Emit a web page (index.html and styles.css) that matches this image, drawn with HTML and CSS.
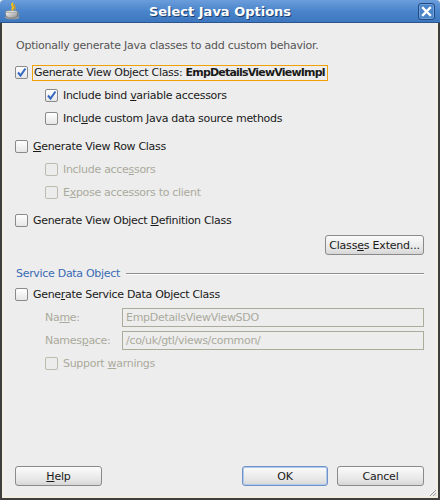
FILE: index.html
```html
<!DOCTYPE html>
<html>
<head>
<meta charset="utf-8">
<link rel="stylesheet" href="styles.css">
</head>
<body>
<div class="window">
  <div class="titlebar">
    <svg class="app-icon" width="18" height="18" viewBox="0 0 18 18">
      <defs>
        <linearGradient id="cupg" x1="0" y1="0" x2="1" y2="1">
          <stop offset="0" stop-color="#ffffff"/>
          <stop offset="1" stop-color="#8a8a8a"/>
        </linearGradient>
      </defs>
      <path d="M9.5 1.5 C7.5 3.5, 11.5 4.5, 9.5 6.5 C8.5 7.5, 10.5 8.5, 9.5 9.5" fill="none" stroke="#f2c20f" stroke-width="2" stroke-linecap="round"/>
      <path d="M11.5 3 C10.5 4.5, 13 5, 12 7" fill="none" stroke="#e89a0c" stroke-width="1.2" stroke-linecap="round"/>
      <ellipse cx="9" cy="15.5" rx="7.5" ry="1.8" fill="#9a9a9a"/>
      <path d="M2.5 9.5 h12 v2.5 a5 4.5 0 0 1 -5 4 h-2 a5 4.5 0 0 1 -5 -4z" fill="url(#cupg)" stroke="#6e6e6e" stroke-width="0.6"/>
      <ellipse cx="8.5" cy="9.6" rx="6" ry="1.2" fill="#d8d8d8" stroke="#7a7a7a" stroke-width="0.5"/>
      <path d="M14.5 10.5 a2 2 0 0 1 0 3.6" fill="none" stroke="#8a8a8a" stroke-width="1.2"/>
    </svg>
    <div class="title">Select Java Options</div>
    <div class="close">
      <svg width="11" height="11" viewBox="0 0 11 11"><path d="M2 2 L9 9 M9 2 L2 9" stroke="#ffffff" stroke-width="2.4" stroke-linecap="square"/></svg>
    </div>
  </div>
  <div class="content">
    <p class="intro">Optionally generate Java classes to add custom behavior.</p>

    <div class="row"><span class="cb checked"><svg width="11" height="11" viewBox="0 0 11 11"><path d="M2 5.5 L4.5 8.5 L9.5 1.5" fill="none" stroke="#3467c0" stroke-width="2"/></svg></span><span class="label focus">Generate View Ob<u>j</u>ect Class: <b>EmpDetailsViewViewImpl</b></span></div>
    <div class="row indent"><span class="cb checked"><svg width="11" height="11" viewBox="0 0 11 11"><path d="M2 5.5 L4.5 8.5 L9.5 1.5" fill="none" stroke="#3467c0" stroke-width="2"/></svg></span><span class="label">Include bind <u>v</u>ariable accessors</span></div>
    <div class="row indent"><span class="cb"></span><span class="label">Incl<u>u</u>de custom Java data source methods</span></div>

    <div class="row group"><span class="cb"></span><span class="label"><u>G</u>enerate View Row Class</span></div>
    <div class="row indent disabled"><span class="cb"></span><span class="label">Include acce<u>s</u>sors</span></div>
    <div class="row indent disabled"><span class="cb"></span><span class="label">E<u>x</u>pose accessors to client</span></div>

    <div class="row group"><span class="cb"></span><span class="label">Generate View Object <u>D</u>efinition Class</span></div>

    <div class="btn-row"><button class="btn extend">Class<u>e</u>s Extend...</button></div>

    <div class="section"><span class="section-title">Service Data Object</span><span class="section-line"></span></div>

    <div class="row sdo"><span class="cb"></span><span class="label">Gene<u>r</u>ate Service Data Object Class</span></div>
    <div class="field-row"><span class="field-label">Na<u>m</u>e:</span><span class="field">EmpDetailsViewViewSDO</span></div>
    <div class="field-row"><span class="field-label">Names<u>p</u>ace:</span><span class="field">/co/uk/gtl/views/common/</span></div>
    <div class="row indent disabled"><span class="cb"></span><span class="label">Support <u>w</u>arnings</span></div>

    <div class="footer">
      <button class="btn help"><u>H</u>elp</button>
      <span class="spacer"></span>
      <button class="btn ok">OK</button>
      <button class="btn cancel">Cancel</button>
    </div>
    <svg class="grip" width="8" height="8" viewBox="0 0 8 8"><path d="M7 1 L1 7 M7 4 L4 7 M7 6.5 L6.5 7" stroke="#9a9a9a" stroke-width="1"/></svg>
  </div>
</div>
</body>
</html>
```
FILE: styles.css
```css
html, body {
  margin: 0;
  padding: 0;
  background: #ededed;
}
body {
  width: 440px;
  height: 500px;
  overflow: hidden;
  font-family: "DejaVu Sans", "Liberation Sans", sans-serif;
  font-size: 11px;
  color: #1a1a1a;
}
.window {
  width: 440px;
  height: 500px;
  display: flex;
  flex-direction: column;
}
.titlebar {
  height: 23px;
  flex: none;
  display: flex;
  align-items: center;
  position: relative;
  background: linear-gradient(#6b9ddb, #4a85cb 50%, #3d77bf);
  border-radius: 4px 4px 0 0;
  border-bottom: 1px solid #2b558c;
  box-sizing: border-box;
}
.app-icon {
  position: absolute;
  left: 3px;
  top: 2px;
}
.title {
  flex: 1;
  text-align: center;
  color: #ffffff;
  font-weight: bold;
  font-size: 13px;
  text-shadow: 1px 1px 0 #1f3f6e;
}
.close {
  position: absolute;
  right: 5px;
  top: 3px;
  width: 17px;
  height: 17px;
  box-sizing: border-box;
  border: 1px solid #234a80;
  border-radius: 3px;
  box-shadow: inset 0 0 0 1px #6f9edb;
  background: #4a84c9;
  display: flex;
  align-items: center;
  justify-content: center;
}
.content {
  flex: 1;
  display: flex;
  flex-direction: column;
  position: relative;
  border: 2px solid #3e3e3e;
  border-top: none;
  box-shadow: inset 2px 0 0 #f3efe3, inset -2px 0 0 #f3efe3, inset 0 -2px 0 #f3efe3;
  padding: 0 14px 12px 13px;
  box-sizing: border-box;
  letter-spacing: -0.3px;
}
.intro {
  margin: 15px 0 0 1px;
  height: 16px;
  line-height: 16px;
  color: #555555;
  letter-spacing: -0.25px;
}
.row {
  display: flex;
  align-items: center;
  height: 23px;
  flex: none;
}
.intro + .row {
  margin-top: 7px;
}
.row.group {
  margin-top: 5px;
}
.indent {
  padding-left: 30px;
}
.cb {
  width: 13px;
  height: 13px;
  box-sizing: border-box;
  border: 1px solid #8a8a8a;
  border-radius: 2px;
  background: linear-gradient(#ffffff, #e6e6e6);
  display: flex;
  align-items: center;
  justify-content: center;
  flex: none;
}
.label {
  margin-left: 5px;
  white-space: nowrap;
}
.label.focus {
  margin-left: 4px;
  border: 1px solid #f0a000;
  padding: 1px 2px 1px 1px;
  line-height: 12px;
}
.label b {
  letter-spacing: -0.8px;
}
.disabled .label {
  color: #aaaa9c;
}
.disabled .cb {
  border-color: #bcbcae;
  background: #ececec;
}
u {
  text-decoration: underline;
  text-underline-offset: 1px;
}
.btn-row {
  display: flex;
  justify-content: flex-end;
  margin-top: 3px;
}
.btn {
  height: 20px;
  box-sizing: border-box;
  border: 1px solid #8a8a8a;
  border-radius: 3px;
  background: linear-gradient(#fbfbfb, #e6e6e6 70%, #d6d6d6);
  font-family: "DejaVu Sans", "Liberation Sans", sans-serif;
  font-size: 11px;
  color: #1a1a1a;
  letter-spacing: -0.2px;
  padding: 0;
  text-align: center;
}
.btn.extend {
  width: 99px;
}
.section {
  display: flex;
  align-items: center;
  height: 16px;
  margin-top: 10px;
  padding-left: 1px;
}
.section-title {
  color: #3a6bb4;
}
.section-line {
  flex: 1;
  height: 1px;
  background: #8e8e8e;
  margin-left: 6px;
  box-shadow: 0 1px 0 #ffffff;
}
.row.sdo {
  margin-top: 2px;
}
.field-row {
  display: flex;
  align-items: center;
  height: 23px;
  padding-left: 30px;
  flex: none;
}
.field-label {
  width: 77px;
  color: #aaaa9c;
  flex: none;
}
.field {
  flex: 1;
  height: 19px;
  box-sizing: border-box;
  border: 1px solid #acac9a;
  background: #ededed;
  color: #aaaa9c;
  padding-left: 3px;
  line-height: 17px;
}
.footer {
  margin-top: auto;
  display: flex;
  align-items: center;
}
.btn.help {
  width: 87px;
}
.spacer {
  flex: 1;
}
.btn.ok {
  width: 86px;
  border-color: #6f93c9;
  box-shadow: inset 0 0 0 1px #b0c9ee;
  margin-right: 9px;
}
.btn.cancel {
  width: 87px;
}
.grip {
  position: absolute;
  right: 1px;
  bottom: 1px;
}
```
